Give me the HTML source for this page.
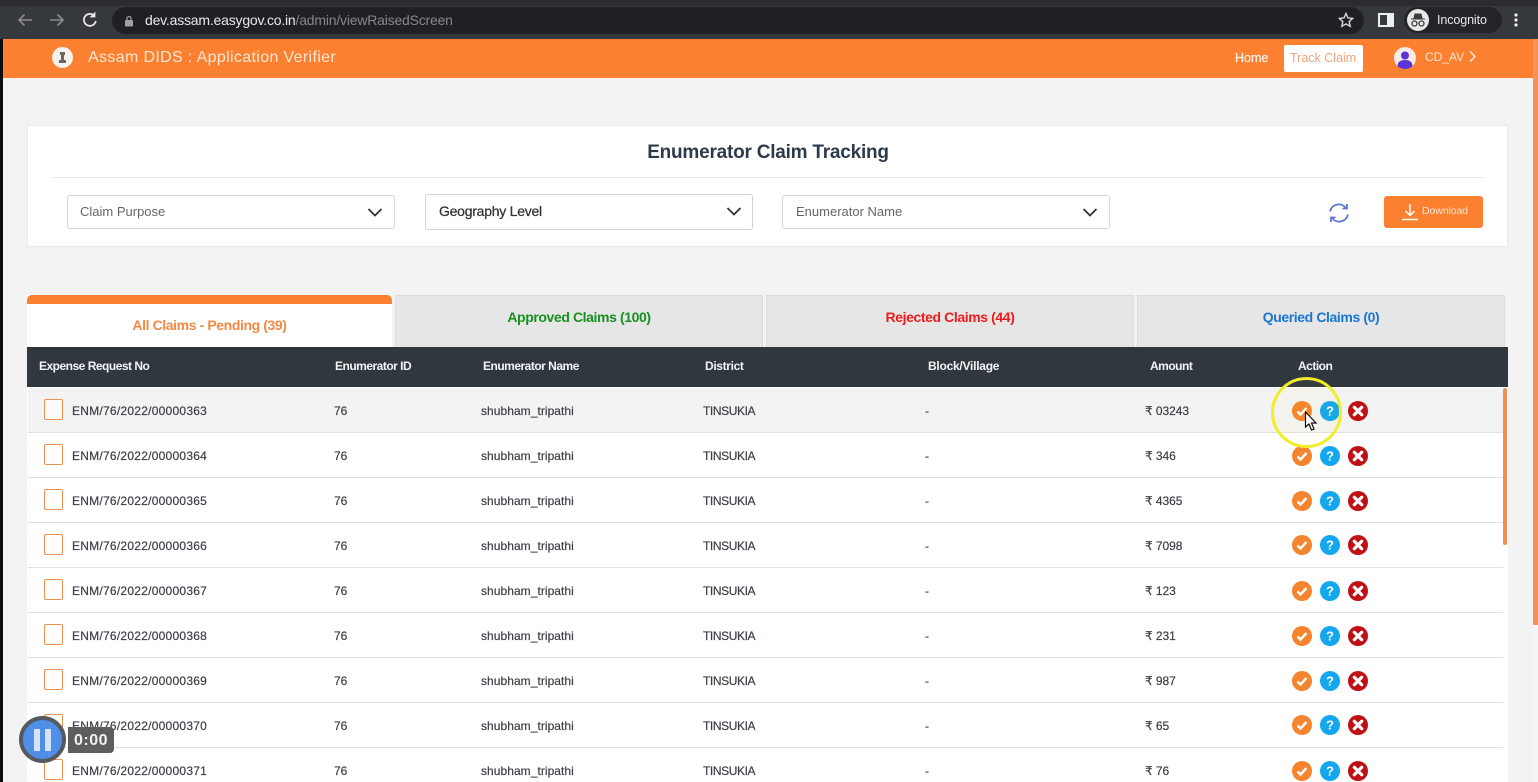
<!DOCTYPE html>
<html><head><meta charset="utf-8"><title>Enumerator Claim Tracking</title>
<style>
*{box-sizing:border-box}
html,body{margin:0;padding:0;width:1538px;height:782px;overflow:hidden;background:#f3f3f3;font-family:"Liberation Sans",sans-serif;color:#3a3f47}
div,span,svg{position:absolute}
.t{white-space:nowrap;line-height:16px}
.hd{top:358px;color:#f2f3f4;font-size:12px;font-weight:bold;letter-spacing:-.5px}
.row{left:28px;width:1475px;height:45px;border-bottom:1px solid #e0e0e0;background:#fff}
.c{font-size:12px;color:#3c4147;white-space:nowrap;line-height:16px;top:15px;-webkit-text-stroke:.2px #3c4147}
.c:nth-child(2){left:44px;letter-spacing:.25px}
.c:nth-child(3){left:306px}
.c:nth-child(4){left:453px;letter-spacing:.05px}
.c:nth-child(5){left:675px;letter-spacing:-.4px}
.c:nth-child(6){left:897px}
.c:nth-child(7){left:1117px;letter-spacing:-.05px}
.cb{left:16px;top:11px;width:19px;height:21px;border:1.5px solid #f0904f;border-radius:2px;background:#fff}
.tab{top:295px;height:52px;background:#e6e6e6;border:1px solid #dcdcdc;border-bottom:none;font-size:14px;font-weight:bold;text-align:center;line-height:42px;letter-spacing:-.4px}
.sel{height:34px;background:#fff;border:1px solid #d4d4d4;border-radius:3px;font-size:13px;line-height:32px;padding-left:12px;color:#666}
</style></head><body>
<svg width="0" height="0" style="position:absolute"><defs>
<symbol id="ok" viewBox="0 0 20 20"><circle cx="10" cy="10" r="10" fill="#f5842e"/><path d="M5.500 10.500l3 3 6-6.500" fill="none" stroke="#fff" stroke-width="2.400"/></symbol>
<symbol id="q" viewBox="0 0 20 20"><circle cx="10" cy="10" r="10" fill="#12a7ee"/><text x="10" y="14.500" font-size="13" font-weight="bold" text-anchor="middle" fill="#fff" font-family="Liberation Sans">?</text></symbol>
<symbol id="x" viewBox="0 0 20 20"><circle cx="10" cy="10" r="10" fill="#c01015"/><path d="M6.300 6.300l7.400 7.400M13.700 6.300l-7.400 7.400" fill="none" stroke="#fff" stroke-width="3.200" stroke-linecap="round"/></symbol>
<symbol id="chev" viewBox="0 0 16 10"><path d="M1.500 2l6.500 6.500L14.500 2" fill="none" stroke="#333" stroke-width="1.800"/></symbol>
</defs></svg>

<!-- browser bar -->
<div style="left:0;top:0;width:1538px;height:39px;background:#35383c"></div>
<div style="left:0;top:0;width:1538px;height:6px;background:#2a2c2f"></div>
<div style="left:112px;top:7px;width:1252px;height:27px;border-radius:14px;background:#1f2023"></div>
<svg style="left:16px;top:11px" width="90" height="18" viewBox="0 0 90 18" fill="none"><path d="M16 9H3M8.500 3.500L3 9l5.500 5.500" stroke="#8a8c8e" stroke-width="1.600"/><path d="M34 9h13M41.500 3.500L47 9l-5.500 5.500" stroke="#8a8c8e" stroke-width="1.600"/><path d="M78 4.500a6 6 0 1 0 1.800 5.500" stroke="#e6e7e8" stroke-width="1.800"/><path d="M79 1v5h-5" fill="#e6e7e8" stroke="#e6e7e8" stroke-width=".8"/></svg>
<svg style="left:124px;top:15px" width="10" height="12" viewBox="0 0 10 12"><rect x="1" y="5" width="8" height="6.500" rx="1" fill="#a0a2a4"/><path d="M3 5V3.500a2 2 0 0 1 4 0V5" fill="none" stroke="#a0a2a4" stroke-width="1.200"/></svg>
<div class="t" style="left:145px;top:12px;font-size:14px;color:#e8e9ea;letter-spacing:-.2px">dev.assam.easygov.co.in<span style="position:static;color:#85888b">/admin/viewRaisedScreen</span></div>
<svg style="left:1338px;top:12px" width="16" height="16" viewBox="0 0 16 16"><path d="M8 1.500l2 4.400 4.700.5-3.500 3.200 1 4.700L8 11.900l-4.200 2.400 1-4.700L1.300 6.400 6 5.900z" fill="none" stroke="#dcdddf" stroke-width="1.400"/></svg>
<svg style="left:1378px;top:13px" width="16" height="14" viewBox="0 0 16 14"><rect x="1" y="1" width="14" height="12" fill="none" stroke="#eee" stroke-width="2"/><rect x="9" y="1" width="6" height="12" fill="#eee"/></svg>
<div style="left:1404px;top:7px;width:98px;height:26px;border-radius:13px;background:#222427"></div>
<svg style="left:1407px;top:9px" width="22" height="22" viewBox="0 0 22 22"><circle cx="11" cy="11" r="11" fill="#e9e9ea"/><path d="M4 10h14M7 9l1-4h6l1 4z" fill="#3b3d40" stroke="#3b3d40"/><circle cx="7.500" cy="14.500" r="2.500" fill="none" stroke="#3b3d40" stroke-width="1.300"/><circle cx="14.500" cy="14.500" r="2.500" fill="none" stroke="#3b3d40" stroke-width="1.300"/></svg>
<div class="t" style="left:1437px;top:12px;font-size:12.500px;color:#e8e9ea;letter-spacing:-.1px">Incognito</div>
<svg style="left:1513px;top:12px" width="6" height="16" viewBox="0 0 6 16"><circle cx="3" cy="3" r="1.600" fill="#eee"/><circle cx="3" cy="8" r="1.600" fill="#eee"/><circle cx="3" cy="13" r="1.600" fill="#eee"/></svg>

<!-- orange header -->
<div style="left:0;top:39px;width:1533px;height:39px;background:#fb8130"></div>
<svg style="left:52px;top:47px" width="21" height="21" viewBox="0 0 21 21"><circle cx="10.500" cy="10.500" r="10.500" fill="#f6f3ee"/><path d="M8 5h5v3h-1v5h2v3H7v-3h2V8H8z" fill="#6c665e"/></svg>
<div class="t" style="left:88px;top:49px;font-size:16px;color:#fbe6d6;letter-spacing:.35px;line-height:18px">Assam DIDS : Application Verifier</div>
<div class="t" style="left:1235px;top:50px;font-size:12.500px;color:#fff2e8;-webkit-text-stroke:.2px #fff2e8">Home</div>
<div style="left:1284px;top:45px;width:79px;height:27px;background:#fff;border-radius:2px"></div>
<div class="t" style="left:1290px;top:50px;font-size:12.500px;color:#f0a37a">Track Claim</div>
<svg style="left:1394px;top:47px" width="22" height="22" viewBox="0 0 22 22"><circle cx="11" cy="11" r="11" fill="#f7ece8"/><circle cx="11" cy="8.500" r="4" fill="#5a35d6"/><path d="M3.500 19c0-4.500 3.500-6 7.500-6s7.500 1.500 7.500 6c-2 2-5 3-7.500 3s-5.500-1-7.500-3z" fill="#5a35d6"/></svg>
<div class="t" style="left:1425px;top:49px;font-size:12px;color:#fde6d3">CD_AV</div>
<svg style="left:1468px;top:50px" width="9" height="13" viewBox="0 0 9 13"><path d="M2 1.500l5 5-5 5" fill="none" stroke="#fde6d3" stroke-width="1.500"/></svg>

<!-- edges -->
<div style="left:0;top:39px;width:3px;height:743px;background:#0c0c0c"></div>
<div style="left:1533px;top:78px;width:5px;height:704px;background:#f5f5f5"></div>
<div style="left:1533px;top:39px;width:5px;height:586px;background:#f39454"></div>

<!-- filter card -->
<div style="left:27px;top:125px;width:1481px;height:122px;background:#fff;border:1px solid #e9e9e9"></div>
<div class="t" style="left:0;top:141px;width:1536px;text-align:center;font-size:19px;line-height:24px;font-weight:bold;color:#2d3a4a;letter-spacing:-.22px">Enumerator Claim Tracking</div>
<div style="left:52px;top:177px;width:1432px;height:1px;background:#ebebeb"></div>
<div class="sel" style="left:67px;top:195px;width:328px">Claim Purpose</div>
<svg style="left:367px;top:207px" width="16" height="10"><use href="#chev"/></svg>
<div class="sel" style="left:425px;top:194px;width:328px;height:36px;padding-left:13px;font-size:14px;line-height:33px;color:#333;letter-spacing:-.25px;-webkit-text-stroke:.25px #333">Geography Level</div>
<svg style="left:726px;top:206px" width="16" height="10"><use href="#chev"/></svg>
<div class="sel" style="left:782px;top:195px;width:328px;padding-left:13px">Enumerator Name</div>
<svg style="left:1082px;top:207px" width="16" height="10"><use href="#chev"/></svg>
<svg style="left:1328px;top:202px" width="22" height="22" viewBox="0 0 22 22" fill="none" stroke="#5f76d0" stroke-width="1.800"><path d="M2 9.500A9 9 0 0 1 18 6"/><path d="M20 12.500A9 9 0 0 1 4 16"/><path d="M14.500 6.500h4.500V2"/><path d="M7.500 15.500H3V20"/></svg>
<div style="left:1384px;top:196px;width:99px;height:32px;background:#fb8130;border-radius:3px"></div>
<svg style="left:1401px;top:203px" width="18" height="18" viewBox="0 0 18 18" fill="none" stroke="#fff" stroke-width="1.500"><path d="M9 1v11M4.500 8L9 12.500 13.500 8M1 16.500h16"/></svg>
<div class="t" style="left:1422px;top:203px;font-size:10.500px;color:#fde6d6;letter-spacing:-.1px">Download</div>

<!-- tabs -->
<div style="left:27px;top:295px;width:365px;height:52px;background:#fff"></div>
<div style="left:27px;top:295px;width:365px;height:9px;background:#fb8130;border-radius:5px 5px 0 0"></div>
<div class="t" style="left:27px;top:317px;width:365px;text-align:center;font-size:14px;font-weight:bold;color:#f08a45;letter-spacing:-.4px">All Claims - Pending (39)</div>
<div class="tab" style="left:395px;width:368px;color:#16901f">Approved Claims (100)</div>
<div class="tab" style="left:766px;width:368px;color:#ee1c1c">Rejected Claims (44)</div>
<div class="tab" style="left:1137px;width:368px;color:#1976d2">Queried Claims (0)</div>

<!-- table -->
<div style="left:27px;top:387px;width:1481px;height:395px;background:#fff"></div>
<div class="row" style="top:388px;background:#f4f3f3"><div class="cb" style="background:#fbfbfb"></div><div class="c">ENM/76/2022/00000363</div><div class="c">76</div><div class="c">shubham_tripathi</div><div class="c">TINSUKIA</div><div class="c">-</div><div class="c">₹ 03243</div></div>
<div class="row" style="top:433px"><div class="cb"></div><div class="c">ENM/76/2022/00000364</div><div class="c">76</div><div class="c">shubham_tripathi</div><div class="c">TINSUKIA</div><div class="c">-</div><div class="c">₹ 346</div></div>
<div class="row" style="top:478px"><div class="cb"></div><div class="c">ENM/76/2022/00000365</div><div class="c">76</div><div class="c">shubham_tripathi</div><div class="c">TINSUKIA</div><div class="c">-</div><div class="c">₹ 4365</div></div>
<div class="row" style="top:523px"><div class="cb"></div><div class="c">ENM/76/2022/00000366</div><div class="c">76</div><div class="c">shubham_tripathi</div><div class="c">TINSUKIA</div><div class="c">-</div><div class="c">₹ 7098</div></div>
<div class="row" style="top:568px"><div class="cb"></div><div class="c">ENM/76/2022/00000367</div><div class="c">76</div><div class="c">shubham_tripathi</div><div class="c">TINSUKIA</div><div class="c">-</div><div class="c">₹ 123</div></div>
<div class="row" style="top:613px"><div class="cb"></div><div class="c">ENM/76/2022/00000368</div><div class="c">76</div><div class="c">shubham_tripathi</div><div class="c">TINSUKIA</div><div class="c">-</div><div class="c">₹ 231</div></div>
<div class="row" style="top:658px"><div class="cb"></div><div class="c">ENM/76/2022/00000369</div><div class="c">76</div><div class="c">shubham_tripathi</div><div class="c">TINSUKIA</div><div class="c">-</div><div class="c">₹ 987</div></div>
<div class="row" style="top:703px"><div class="cb"></div><div class="c">ENM/76/2022/00000370</div><div class="c">76</div><div class="c">shubham_tripathi</div><div class="c">TINSUKIA</div><div class="c">-</div><div class="c">₹ 65</div></div>
<div class="row" style="top:748px;height:34px;border-bottom:none"><div class="cb"></div><div class="c">ENM/76/2022/00000371</div><div class="c">76</div><div class="c">shubham_tripathi</div><div class="c">TINSUKIA</div><div class="c">-</div><div class="c">₹ 76</div></div>

<div style="left:27px;top:347px;width:1481px;height:40px;background:#31373f"></div>
<div class="t hd" style="left:39px">Expense Request No</div>
<div class="t hd" style="left:335px">Enumerator ID</div>
<div class="t hd" style="left:483px">Enumerator Name</div>
<div class="t hd" style="left:705px;letter-spacing:-.35px">District</div>
<div class="t hd" style="left:928px;letter-spacing:-.25px">Block/Village</div>
<div class="t hd" style="left:1150px">Amount</div>
<div class="t hd" style="left:1298px">Action</div>

<!-- inner scrollbar -->
<div style="left:1503px;top:388px;width:4px;height:157px;background:#ef9052;border-radius:2px"></div>

<!-- action icons -->
<svg style="left:1292px;top:401px" width="20" height="20"><use href="#ok"/></svg><svg style="left:1320px;top:401px" width="20" height="20"><use href="#q"/></svg><svg style="left:1348px;top:401px" width="20" height="20"><use href="#x"/></svg>
<svg style="left:1292px;top:446px" width="20" height="20"><use href="#ok"/></svg><svg style="left:1320px;top:446px" width="20" height="20"><use href="#q"/></svg><svg style="left:1348px;top:446px" width="20" height="20"><use href="#x"/></svg>
<svg style="left:1292px;top:491px" width="20" height="20"><use href="#ok"/></svg><svg style="left:1320px;top:491px" width="20" height="20"><use href="#q"/></svg><svg style="left:1348px;top:491px" width="20" height="20"><use href="#x"/></svg>
<svg style="left:1292px;top:535px" width="20" height="20"><use href="#ok"/></svg><svg style="left:1320px;top:535px" width="20" height="20"><use href="#q"/></svg><svg style="left:1348px;top:535px" width="20" height="20"><use href="#x"/></svg>
<svg style="left:1292px;top:581px" width="20" height="20"><use href="#ok"/></svg><svg style="left:1320px;top:581px" width="20" height="20"><use href="#q"/></svg><svg style="left:1348px;top:581px" width="20" height="20"><use href="#x"/></svg>
<svg style="left:1292px;top:626px" width="20" height="20"><use href="#ok"/></svg><svg style="left:1320px;top:626px" width="20" height="20"><use href="#q"/></svg><svg style="left:1348px;top:626px" width="20" height="20"><use href="#x"/></svg>
<svg style="left:1292px;top:671px" width="20" height="20"><use href="#ok"/></svg><svg style="left:1320px;top:671px" width="20" height="20"><use href="#q"/></svg><svg style="left:1348px;top:671px" width="20" height="20"><use href="#x"/></svg>
<svg style="left:1292px;top:715px" width="20" height="20"><use href="#ok"/></svg><svg style="left:1320px;top:715px" width="20" height="20"><use href="#q"/></svg><svg style="left:1348px;top:715px" width="20" height="20"><use href="#x"/></svg>
<svg style="left:1292px;top:761px" width="20" height="20"><use href="#ok"/></svg><svg style="left:1320px;top:761px" width="20" height="20"><use href="#q"/></svg><svg style="left:1348px;top:761px" width="20" height="20"><use href="#x"/></svg>

<!-- cursor highlight -->
<div style="left:1271px;top:377px;width:71px;height:71px;border:3px solid #f0ee2a;border-radius:50%;background:rgba(240,238,42,.03)"></div>
<svg style="left:1304px;top:411px" width="14" height="21" viewBox="0 0 14 21"><path d="M1.500 1v15l3.500-3 2.500 6 2.500-1-2.500-6h4.500z" fill="#fff" stroke="#111" stroke-width="1.200"/></svg>

<!-- recording widget -->
<div style="left:68px;top:727px;width:46px;height:26px;background:#5e5e5e;border-radius:0 4px 4px 0"></div>
<div class="t" style="left:74px;top:733px;font-size:16px;font-weight:bold;color:#f1f1f1;letter-spacing:.5px">0:00</div>
<div style="left:19px;top:716px;width:47px;height:47px;border-radius:50%;background:#4f8fe8;border:4px solid #565a60"></div>
<div style="left:34px;top:729px;width:6px;height:22px;background:#d6e3f7"></div>
<div style="left:45px;top:729px;width:6px;height:22px;background:#d6e3f7"></div>
</body></html>
